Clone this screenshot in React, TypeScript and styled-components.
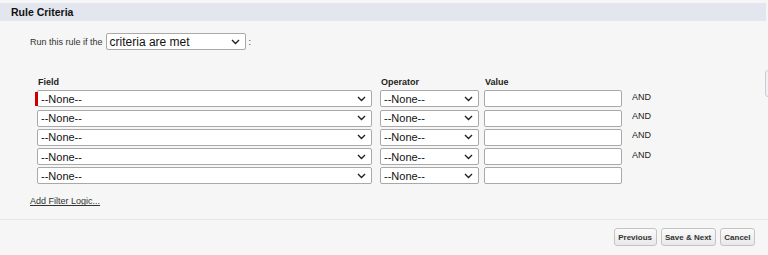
import React from "react";
import styled, { createGlobalStyle } from "styled-components";

const Global = createGlobalStyle`
  html, body {
    margin: 0;
    padding: 0;
    background: #f6f6f6;
    font-family: "Liberation Sans", Arial, sans-serif;
    color: #222;
  }
`;

const Page = styled.div`
  width: 768px;
  height: 255px;
  position: relative;
  overflow: hidden;
  background: #f6f6f6;
  padding-top: 3px;
  box-sizing: border-box;
`;

const Header = styled.div`
  margin-right: 2px;
  height: 18px;
  background: #e3e6ef;
  display: flex;
  align-items: center;
  padding-left: 11px;
  font-size: 10.5px;
  font-weight: bold;
  color: #111;
`;

const Body = styled.div`
  padding: 12px 0 0 30px;
`;

const RunLine = styled.div`
  display: flex;
  align-items: center;
  gap: 3px;
  font-size: 9px;
  color: #333;
`;

const Select = styled.div<{ $w: number; $big?: boolean }>`
  width: ${(p) => p.$w}px;
  height: 17px;
  box-sizing: border-box;
  border: 1px solid #a9a9a9;
  border-radius: 2px;
  background: #fff;
  display: flex;
  align-items: center;
  justify-content: space-between;
  padding: 0 5px 0 3px;
  font-size: ${(p) => (p.$big ? 12 : 11)}px;
  color: #111;
  position: relative;
`;

const Chevron = () => (
  <svg width="9" height="6" viewBox="0 0 9 6">
    <path d="M1 1l3.5 3.5L8 1" fill="none" stroke="#222" strokeWidth="1.4" />
  </svg>
);

const Grid = styled.div`
  margin-top: 27px;
  margin-left: 7px;
  display: grid;
  grid-template-columns: 338px 99px 138px auto;
  column-gap: 5px;
  row-gap: 2.3px;
  align-items: center;
`;

const ColHead = styled.div`
  font-size: 9px;
  font-weight: bold;
  color: #222;
  padding-left: 1px;
  margin-bottom: 1px;
`;

const Input = styled.div`
  width: 138px;
  height: 17px;
  box-sizing: border-box;
  border: 1px solid #a9a9a9;
  border-radius: 2px;
  background: #fff;
`;

const And = styled.div`
  font-size: 9px;
  color: #222;
  padding-left: 5px;
  margin-top: -4px;
`;

const Required = styled.span`
  position: absolute;
  left: -3px;
  top: 1px;
  width: 3px;
  height: 14px;
  background: #c00;
`;

const FilterLink = styled.a`
  display: inline-block;
  margin-top: 12px;
  font-size: 9px;
  color: #333;
  text-decoration: underline;
`;

const Footer = styled.div`
  margin-top: 11px;
  border-top: 1px solid #e6e6e6;
  display: flex;
  justify-content: flex-end;
  gap: 4px;
  padding: 8px 13px 0 0;
`;

const Button = styled.button`
  height: 18px;
  padding: 0 3.5px;
  border: 1px solid #c4c4c4;
  border-radius: 3px;
  background: linear-gradient(#fafafa, #e9e9e9);
  font-family: "Liberation Sans", Arial, sans-serif;
  font-size: 8px;
  font-weight: bold;
  color: #333;
`;

const EdgeTab = styled.div`
  position: absolute;
  right: -6px;
  top: 70px;
  width: 7px;
  height: 25px;
  border: 1px solid #ccc;
  border-radius: 3px;
  background: #eef1f5;
`;

const rows = [true, true, true, true, false];

export default function App() {
  return (
    <Page>
      <Global />
      <Header>Rule Criteria</Header>
      <Body>
        <RunLine>
          Run this rule if the
          <Select $w={140} $big>
            criteria are met
            <Chevron />
          </Select>
          :
        </RunLine>
        <Grid>
          <ColHead>Field</ColHead>
          <ColHead>Operator</ColHead>
          <ColHead>Value</ColHead>
          <div />
          {rows.map((and, i) => (
            <React.Fragment key={i}>
              <Select $w={335}>
                {i === 0 && <Required />}
                --None--
                <Chevron />
              </Select>
              <Select $w={99}>
                --None--
                <Chevron />
              </Select>
              <Input />
              <And>{and ? "AND" : ""}</And>
            </React.Fragment>
          ))}
        </Grid>
        <FilterLink>Add Filter Logic...</FilterLink>
      </Body>
      <Footer>
        <Button>Previous</Button>
        <Button>Save &amp; Next</Button>
        <Button>Cancel</Button>
      </Footer>
      <EdgeTab />
    </Page>
  );
}
